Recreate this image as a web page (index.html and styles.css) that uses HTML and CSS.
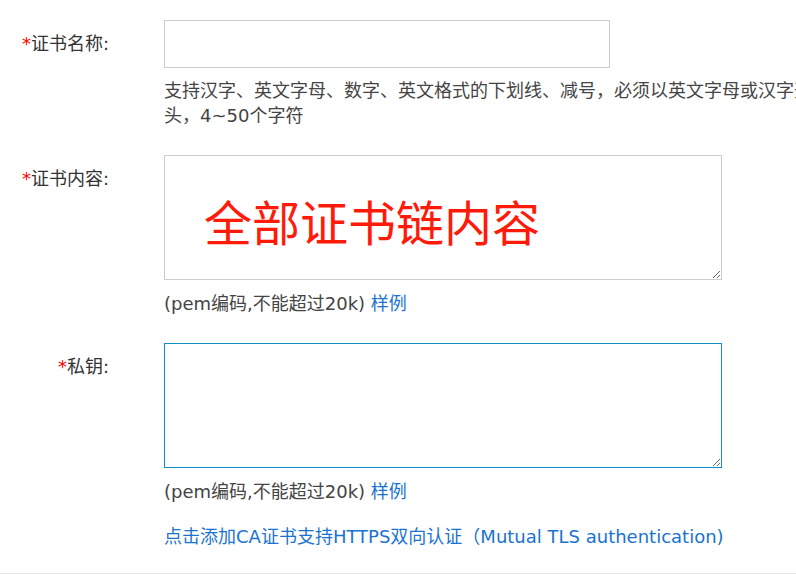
FILE: index.html
```html
<!DOCTYPE html>
<html lang="zh-CN">
<head>
<meta charset="utf-8">
<title>证书</title>
<link rel="stylesheet" href="styles.css">
</head>
<body>
<form class="form">
  <div class="row">
    <label class="label"><span class="req">*</span>证书名称:</label>
    <div class="field">
      <input class="input" type="text">
      <p class="help help-wide">支持汉字、英文字母、数字、英文格式的下划线、减号，必须以英文字母或汉字开头，4~50个字符</p>
    </div>
  </div>
  <div class="row row-gap">
    <label class="label"><span class="req">*</span>证书内容:</label>
    <div class="field">
      <textarea class="area area-note">全部证书链内容</textarea>
      <p class="help">(pem编码,不能超过20k) <a class="link" href="#">样例</a></p>
    </div>
  </div>
  <div class="row row-gap">
    <label class="label"><span class="req">*</span>私钥:</label>
    <div class="field">
      <textarea class="area area-focus"></textarea>
      <p class="help">(pem编码,不能超过20k) <a class="link" href="#">样例</a></p>
      <p class="help help-link"><a class="link" href="#">点击添加CA证书支持HTTPS双向认证（Mutual TLS authentication)</a></p>
    </div>
  </div>
</form>
</body>
</html>
```
FILE: styles.css
```css
html, body {
  margin: 0;
  padding: 0;
  overflow: hidden;
  background: #fff;
}
body {
  width: 796px;
  height: 575px;
  font-family: "DejaVu Sans", "Noto Sans CJK SC", sans-serif;
  font-size: 18px;
  line-height: 25px;
  color: #333;
}
.form {
  padding-top: 20px;
  height: 553px;
  border-bottom: 1px solid #e6e6e6;
  box-sizing: content-box;
}
.row {
  display: flex;
  align-items: flex-start;
}
.row-gap {
  margin-top: 27px;
}
.label {
  flex: 0 0 109px;
  text-align: right;
  padding-top: 11px;
  margin-right: 55px;
  color: #333;
  white-space: nowrap;
}
.req {
  color: #f00;
}
.field {
  flex: 0 0 auto;
  display: flex;
  flex-direction: column;
  align-items: flex-start;
}
.input {
  width: 446px;
  height: 48px;
  box-sizing: border-box;
  border: 1px solid #ccc;
  margin: 0;
  outline: none;
}
.area {
  width: 558px;
  height: 125px;
  box-sizing: border-box;
  border: 1px solid #ccc;
  margin: 0;
  outline: none;
  font-family: "Noto Sans CJK SC", sans-serif;
  display: block;
}
.area-note {
  color: #ff1a0a;
  font-size: 48px;
  line-height: 48px;
  padding: 40px 0 0 39px;
  overflow: hidden;
}
.area-focus {
  border-color: #0e91c8;
}
.help {
  margin: 11px 0 0;
  color: #444;
  white-space: nowrap;
}
.help-wide {
  margin-top: 10px;
  white-space: normal;
  width: 650px;
}
.help-link {
  margin-top: 20px;
}
.link {
  color: #1a73cf;
  text-decoration: none;
}
```
